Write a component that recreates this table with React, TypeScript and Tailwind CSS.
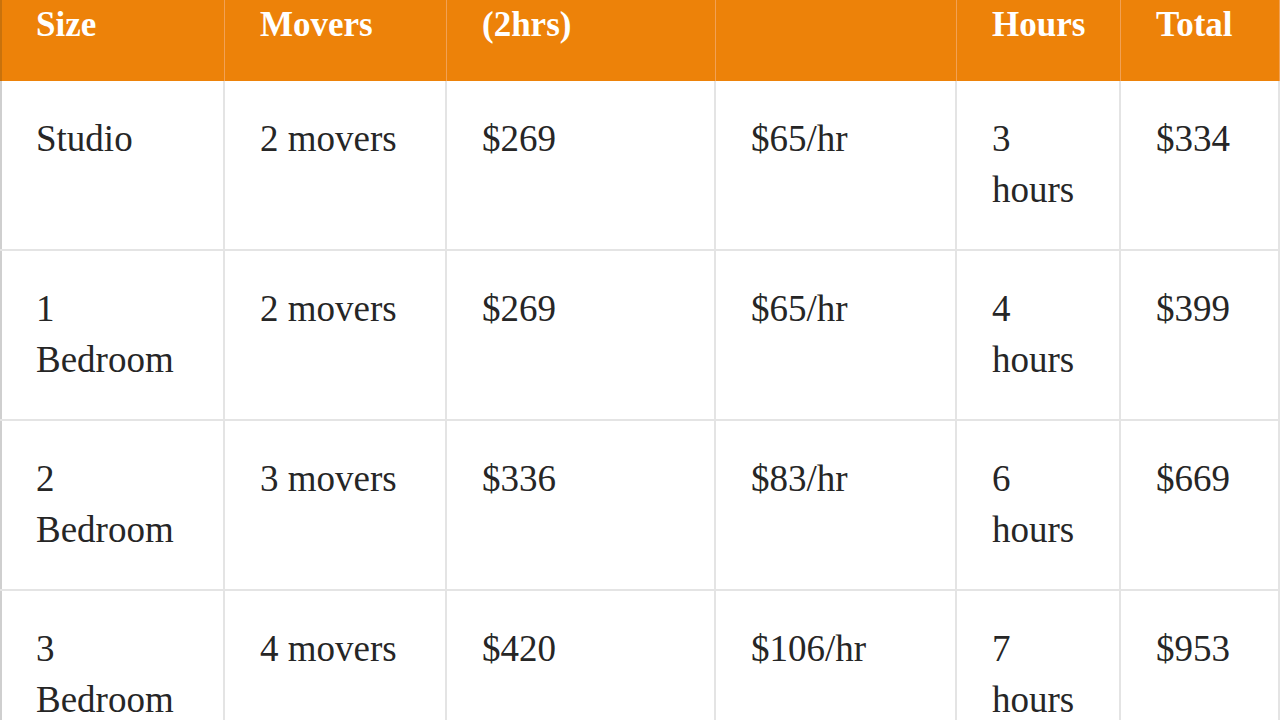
const headers = ["Size", "Movers", "(2hrs)", "", "Hours", "Total"];

const rows = [
  ["Studio", "2 movers", "$269", "$65/hr", "3 hours", "$334"],
  ["1 Bedroom", "2 movers", "$269", "$65/hr", "4 hours", "$399"],
  ["2 Bedroom", "3 movers", "$336", "$83/hr", "6 hours", "$669"],
  ["3 Bedroom", "4 movers", "$420", "$106/hr", "7 hours", "$953"],
];

const cols = "grid grid-cols-[225px_222px_269px_241px_164px_1fr]";

export default function App() {
  return (
    <div className="h-screen w-full overflow-hidden bg-white font-['Liberation_Serif',serif]">
      {/* header row, scrolled so only the last line shows */}
      <div className={`${cols} h-[81px] bg-[#ed8209] overflow-hidden`}>
        {headers.map((h, i) => (
          <div
            key={i}
            className={`pr-[20px] text-[35px] font-bold leading-[50px] text-white border-r border-[#f2a154] ${
              i === 0 ? "border-l-2 border-l-[#c9720c] pl-[34px]" : "pl-[35px]"
            }`}
          >
            {h}
          </div>
        ))}
      </div>

      {rows.map((row, r) => (
        <div key={r} className={`${cols} h-[170px] border-b-2 border-[#e4e4e4]`}>
          {row.map((cell, i) => (
            <div
              key={i}
              className={`pt-[32px] pr-[35px] text-[37px] leading-[51px] text-[#262626] border-r-2 border-[#e4e4e4] ${
                i === 0 ? "border-l-2 border-l-[#cfcfcf] pl-[34px]" : "pl-[35px]"
              }`}
            >
              {cell}
            </div>
          ))}
        </div>
      ))}
    </div>
  );
}
